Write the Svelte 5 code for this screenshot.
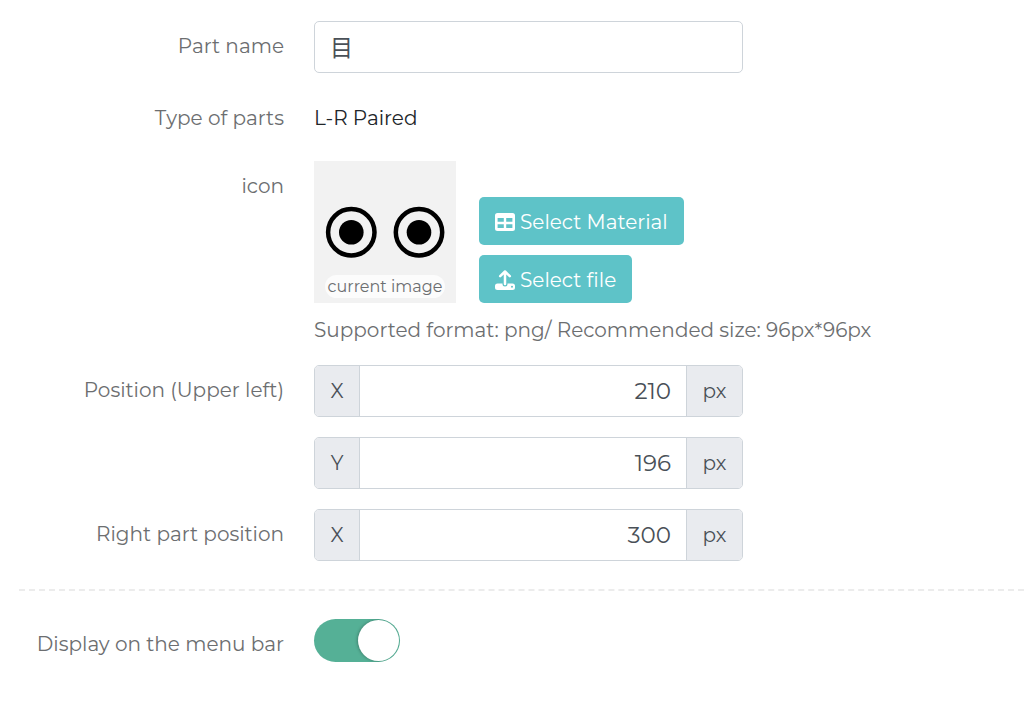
<script>
  let partName = $state('目');
  let showOnMenu = $state(true);
  let left = $state('210');
  let top = $state('196');
  let right = $state('300');
</script>

{#snippet coordinate(id, axis, value, update, label)}
  <div class="group">
    <span class="addon axis">{axis}</span>
    <input
      {id}
      class="number"
      type="text"
      inputmode="numeric"
      aria-label={label}
      {value}
      oninput={(e) => update(e.currentTarget.value)}
    />
    <span class="addon unit">px</span>
  </div>
{/snippet}

<form class="form" onsubmit={(e) => e.preventDefault()}>
  <div class="row">
    <label class="label" for="part-name">Part name</label>
    <div class="field">
      <input id="part-name" class="text" type="text" bind:value={partName} />
    </div>
  </div>

  <div class="row">
    <span class="label">Type of parts</span>
    <span class="value">L-R Paired</span>
  </div>

  <div class="row icon-row">
    <span class="label">icon</span>
    <div>
      <div class="media">
        <figure class="tile">
          <svg viewBox="0 0 142 142" aria-hidden="true">
            <g fill="none" stroke="#000" stroke-width="4.5">
              <circle cx="37.3" cy="71.3" r="23.2" />
              <circle cx="105" cy="71.3" r="23.2" />
            </g>
            <circle cx="37.3" cy="71.3" r="12.3" />
            <circle cx="105" cy="71.3" r="12.3" />
          </svg>
          <figcaption>current image</figcaption>
        </figure>
        <div class="buttons">
          <button type="button">
            <svg viewBox="0 0 20 20" aria-hidden="true">
              <path
                fill="#fff"
                fill-rule="evenodd"
                d="M2.500 1h15A2.500 2.500 0 0 1 20 3.500v13a2.500 2.500 0 0 1-2.500 2.500h-15A2.500 2.500 0 0 1 0 16.500v-13A2.500 2.500 0 0 1 2.500 1zM2.600 6v3.700h6.200V6zM11.200 6v3.700h6.200V6zM2.600 12.200v3.700h6.200v-3.700zM11.200 12.200v3.700h6.200v-3.700z"
              />
            </svg>
            Select Material
          </button>
          <button type="button">
            <svg viewBox="0 0 20 20" aria-hidden="true">
              <path
                fill="none"
                stroke="#fff"
                stroke-width="2.5"
                stroke-linecap="round"
                stroke-linejoin="round"
                d="M10 14V1.800M5.200 6.200 10 1.500l4.800 4.700"
              />
              <path
                fill="#fff"
                fill-rule="evenodd"
                d="M2.500 13.500h5V14a2.500 2.500 0 0 0 5 0v-.5h5A2.500 2.500 0 0 1 20 16v1.500a2.500 2.500 0 0 1-2.500 2.500h-15A2.500 2.500 0 0 1 0 17.500V16a2.500 2.500 0 0 1 2.500-2.500zM17 15.800a1 1 0 1 0 0 2 1 1 0 0 0 0-2z"
              />
            </svg>
            Select file
          </button>
        </div>
      </div>
      <p class="help">Supported format: png/ Recommended size: 96px*96px</p>
    </div>
  </div>

  <div class="row">
    <label class="label" for="left-x">Position (Upper left)</label>
    <div class="field stack">
      {@render coordinate('left-x', 'X', left, (v) => (left = v), 'Position X')}
      {@render coordinate('left-y', 'Y', top, (v) => (top = v), 'Position Y')}
    </div>
  </div>

  <div class="row">
    <label class="label" for="right-x">Right part position</label>
    <div class="field">
      {@render coordinate('right-x', 'X', right, (v) => (right = v), 'Right part position X')}
    </div>
  </div>

  <hr />

  <div class="row">
    <label class="label" for="show">Display on the menu bar</label>
    <input id="show" class="switch" type="checkbox" role="switch" bind:checked={showOnMenu} />
  </div>
</form>

<style>
  :global(body) {
    margin: 0;
    background: #fff;
  }

  .form,
  .form input,
  .form button {
    box-sizing: border-box;
    font-family: Montserrat, Inter, 'Noto Sans CJK JP', sans-serif;
  }

  .form {
    padding: 21px 0 40px 19px;
    font-size: 20px;
    line-height: 30px;
    color: #6c6e70;
  }

  .row {
    display: grid;
    grid-template-columns: 265px minmax(0, 1fr);
    column-gap: 30px;
    margin-bottom: 20px;
  }

  .label {
    padding-top: 10px;
    text-align: right;
    white-space: nowrap;
  }

  .value {
    padding: 10px 0;
    color: #212529;
  }

  .field {
    max-width: 429px;
  }

  .stack {
    display: grid;
    gap: 20px;
  }

  .text,
  .group {
    width: 100%;
    height: 52px;
    border: 1px solid #ced4da;
    border-radius: 5px;
    background: #fff;
  }

  .text {
    display: block;
    padding: 0 15px 2px;
    font-size: 23px;
    color: #495057;
  }

  .icon-row {
    margin-top: -2px;
  }

  .media {
    display: flex;
    align-items: flex-end;
    gap: 23px;
  }

  .tile {
    position: relative;
    width: 142px;
    height: 142px;
    margin: 0;
    background: #f2f2f2;
  }

  .tile svg {
    display: block;
    width: 100%;
  }

  figcaption {
    position: absolute;
    right: 11px;
    bottom: 5px;
    left: 11px;
    border-radius: 12px;
    background: #fcfcfc;
    font-size: 16px;
    line-height: 23px;
    text-align: center;
    white-space: nowrap;
  }

  .buttons {
    display: flex;
    flex-direction: column;
    align-items: flex-start;
    gap: 10px;
  }

  button {
    display: flex;
    align-items: center;
    gap: 5px;
    height: 48px;
    padding: 1px 16px 0;
    border: 0;
    border-radius: 5px;
    background: #5ec3c8;
    color: #fff;
    font-size: 20px;
    white-space: nowrap;
    cursor: pointer;
  }

  button svg {
    width: 20px;
    height: 20px;
  }

  .help {
    margin: 12px 0 0;
  }

  .group {
    display: flex;
    box-sizing: border-box;
    overflow: hidden;
  }

  .addon {
    display: grid;
    place-items: center;
    background: #e9ebef;
    color: #495057;
  }

  .axis {
    flex: 0 0 44px;
    border-right: 1px solid #ced4da;
  }

  .unit {
    flex: 0 0 55px;
    border-left: 1px solid #ced4da;
  }

  .number {
    flex: 1;
    min-width: 0;
    padding: 0 15px;
    border: 0;
    background: #fff;
    font-size: 23px;
    text-align: right;
    color: #495057;
  }

  hr {
    height: 0;
    margin: 28px 0;
    border: 0;
    border-top: 2px dashed #ececec;
  }

  .switch {
    appearance: none;
    overflow: hidden;
    width: 86px;
    height: 43px;
    margin: 0;
    padding: 1px;
    border-radius: 22px;
    background: #c9ced3;
    cursor: pointer;
  }

  .switch::before {
    content: '';
    display: block;
    width: 41px;
    height: 41px;
    border-radius: 50%;
    background: #fff;
    box-shadow: -1px 0 3px rgba(0, 0, 0, 0.25);
  }

  .switch:checked {
    background: #55b096;
  }

  .switch:checked::before {
    margin-left: auto;
  }
</style>
